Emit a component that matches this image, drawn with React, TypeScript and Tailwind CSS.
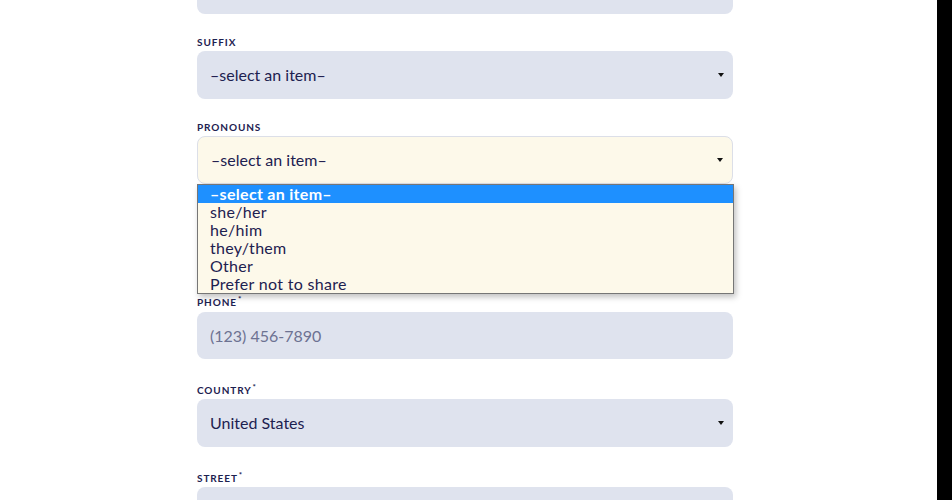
import React from "react";

const font = { fontFamily: "Lato, 'Noto Sans', sans-serif" };

function Caret() {
  return (
    <svg width="6" height="4" viewBox="0 0 6 4" className="shrink-0">
      <path d="M0 0 H6 L3 4 Z" fill="#111" />
    </svg>
  );
}

function Label({ text, required }: { text: string; required?: boolean }) {
  return (
    <div className="flex items-start text-[10px] leading-[13px] font-bold uppercase tracking-[0.9px] text-[#1d2150]">
      <span>{text}</span>
      {required && <span className="ml-[1px] text-[8px] leading-[6px]">*</span>}
    </div>
  );
}

function SelectBox({ value, open }: { value: string; open?: boolean }) {
  return (
    <div
      className={
        "flex h-12 items-center justify-between rounded-lg pl-[13px] pr-[9px] text-[16px] text-[#1d2150] " +
        (open ? "border border-[#dcdfe8] bg-[#fdf9ea] pl-[12px]" : "bg-[#dfe3ee]")
      }
    >
      <span>{value}</span>
      <Caret />
    </div>
  );
}

const pronouns = ["–select an item–", "she/her", "he/him", "they/them", "Other", "Prefer not to share"];

export default function App() {
  return (
    <div className="flex h-[500px] w-full overflow-hidden bg-white" style={font}>
      <div className="flex-1">
        <div className="ml-[197px] w-[536px]">
          <div className="h-[14px] rounded-b-lg bg-[#dfe3ee]" />

          <div className="mt-[22px] mb-[2px]">
            <Label text="Suffix" />
          </div>
          <SelectBox value="–select an item–" />

          <div className="mt-[22px] mb-[2px]">
            <Label text="Pronouns" />
          </div>
          <div className="relative">
            <SelectBox value="–select an item–" open />
            <ul className="absolute left-0 top-full z-10 w-[537px] border border-[#767676] bg-[#fdf9ea] text-[16px] leading-[18px] tracking-[0.3px] text-[#1d2150] shadow-[2px_3px_6px_rgba(0,0,0,0.25)]">
              {pronouns.map((p, i) => (
                <li
                  key={p}
                  className={"pl-[12px] " + (i === 0 ? "bg-[#1e90ff] font-bold text-white" : "")}
                >
                  {p}
                </li>
              ))}
            </ul>
          </div>

          <div className="mt-[112px] mb-[3px]">
            <Label text="Phone" required />
          </div>
          <div className="flex h-[47px] items-center rounded-lg bg-[#dfe3ee] pl-[13px] text-[16px] text-[#6d7292]">
            (123) 456-7890
          </div>

          <div className="mt-[25px] mb-[2px]">
            <Label text="Country" required />
          </div>
          <SelectBox value="United States" />

          <div className="mt-[25px] mb-[2px]">
            <Label text="Street" required />
          </div>
          <div className="h-12 rounded-lg bg-[#dfe3ee]" />
        </div>
      </div>
      <div className="h-[500px] w-[15px] shrink-0 bg-black" />
    </div>
  );
}
